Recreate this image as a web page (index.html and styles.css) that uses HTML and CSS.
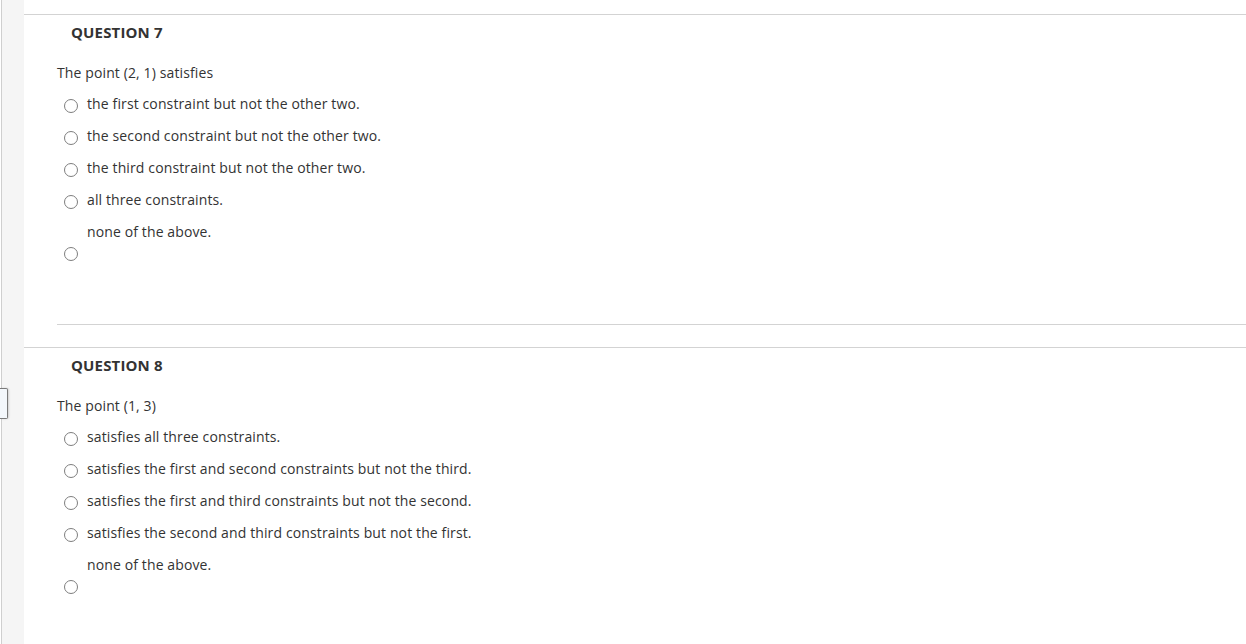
FILE: index.html
```html
<!DOCTYPE html>
<html lang="en">
<head>
<meta charset="utf-8">
<title>Questions</title>
<link rel="stylesheet" href="styles.css">
</head>
<body>
<div class="page">
  <div class="rail"><div class="rail-tab"></div></div>
  <main class="main">
    <section class="question">
      <h3 class="q-head">QUESTION 7</h3>
      <div class="q-body">
        <p class="prompt">The point (2, 1) satisfies</p>
        <ul class="options">
          <li class="option"><span class="radio"></span><span class="label">the first constraint but not the other two.</span></li>
          <li class="option"><span class="radio"></span><span class="label">the second constraint but not the other two.</span></li>
          <li class="option"><span class="radio"></span><span class="label">the third constraint but not the other two.</span></li>
          <li class="option"><span class="radio"></span><span class="label">all three constraints.</span></li>
          <li class="option option-stack"><span class="label">none of the above.</span><span class="radio"></span></li>
        </ul>
        <div class="q-sep"></div>
      </div>
    </section>
    <section class="question">
      <h3 class="q-head">QUESTION 8</h3>
      <div class="q-body">
        <p class="prompt">The point (1, 3)</p>
        <ul class="options">
          <li class="option"><span class="radio"></span><span class="label">satisfies all three constraints.</span></li>
          <li class="option"><span class="radio"></span><span class="label">satisfies the first and second constraints but not the third.</span></li>
          <li class="option"><span class="radio"></span><span class="label">satisfies the first and third constraints but not the second.</span></li>
          <li class="option"><span class="radio"></span><span class="label">satisfies the second and third constraints but not the first.</span></li>
          <li class="option option-stack"><span class="label">none of the above.</span><span class="radio"></span></li>
        </ul>
      </div>
    </section>
  </main>
</div>
</body>
</html>
```
FILE: styles.css
```css
html, body {
  margin: 0;
  padding: 0;
  background: #ffffff;
}
body {
  font-family: "Open Sans", "Liberation Sans", sans-serif;
  font-size: 14px;
  line-height: 20px;
  color: #333333;
  overflow: hidden;
}
.page {
  display: flex;
  min-height: 644px;
}
.rail {
  position: relative;
  width: 22px;
  margin-left: 1px;
  border-left: 1px solid #cfcfcf;
  background: #f5f5f5;
  flex: none;
}
.rail-tab {
  position: absolute;
  left: -2px;
  top: 388px;
  width: 7px;
  height: 29px;
  background: #f3f7fb;
  border: 1px solid #7a7a7a;
  border-left: none;
  border-radius: 0 2px 2px 0;
  box-shadow: 1px 0 2px rgba(0,0,0,0.15);
}
.main {
  flex: 1;
  padding-top: 14px;
}
.question {
  border-top: 1px solid #d3d3d3;
  margin-bottom: 22px;
}
.q-head {
  margin: 0;
  padding: 7px 0 0 47px;
  font-size: 15px;
  line-height: 20px;
  font-weight: 700;
  color: #333333;
  letter-spacing: 0.15px;
}
.q-body {
  margin-left: 33px;
  letter-spacing: 0.12px;
}
.prompt {
  margin: 21px 0 11px;
}
.options {
  list-style: none;
  margin: 0;
  padding: 0;
  display: flex;
  flex-direction: column;
  gap: 12px;
}
.option {
  display: flex;
  align-items: center;
  padding-left: 7px;
}
.radio {
  flex: none;
  width: 12px;
  height: 12px;
  border: 1px solid #7e7e7e;
  border-radius: 50%;
  background: #ffffff;
  margin: 3px 9px 0 0;
}
.option-stack {
  flex-direction: column;
  align-items: flex-start;
}
.option-stack .label {
  padding-left: 23px;
}
.option-stack .radio {
  margin-top: 5px;
}
.q-sep {
  margin-top: 63px;
  border-top: 1px solid #d3d3d3;
}
```
